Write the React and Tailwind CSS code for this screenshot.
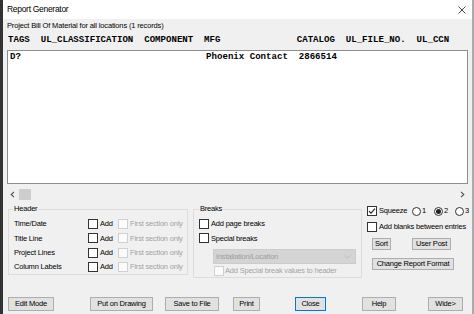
import React from "react";

const Check = ({ checked, disabled }) =>
  disabled ? (
    <span className="w-[10px] h-[10px] shrink-0 border border-[#d0d0d0] bg-[#fbfbfb]" />
  ) : (
    <span className="w-[10px] h-[10px] shrink-0 border border-[#333333] bg-white flex items-center justify-center">
      {checked && (
        <svg width="8" height="8" viewBox="0 0 8 8">
          <path d="M1 4.2 L3 6.2 L7 1.6" fill="none" stroke="#222" strokeWidth="1.1" />
        </svg>
      )}
    </span>
  );

const Radio = ({ on }) => (
  <span className="w-[9px] h-[9px] shrink-0 rounded-full border border-[#333333] bg-white flex items-center justify-center">
    {on && <span className="w-[5px] h-[5px] rounded-full bg-[#222222]" />}
  </span>
);

const Btn = ({ className, children }) => (
  <div
    className={
      "flex items-center justify-center border bg-[#e1e1e1] text-[7.5px] tracking-[-0.2px] text-black leading-none " +
      className
    }
  >
    {children}
  </div>
);

const HeaderRow = ({ label }) => (
  <div className="h-[14.3px] flex items-center">
    <span className="w-[74px]">{label}</span>
    <Check />
    <span className="ml-[2px] w-[18px]">Add</span>
    <Check disabled />
    <span className="ml-[2px] text-[#a3a3a3]">First section only</span>
  </div>
);

export default function App() {
  const header =
    "TAGS  UL_CLASSIFICATION  COMPONENT  MFG              CATALOG  UL_FILE_NO.  UL_CCN";
  const row = "D?                                  Phoenix Contact  2866514";
  return (
    <div className="w-[474px] h-[314px] flex bg-[#f0f0f0] overflow-hidden font-['Liberation_Sans',Arial,sans-serif] text-black">
      <div className="w-[3px] shrink-0 bg-[#333333]" />
      <div className="flex-1 flex flex-col">
        {/* title bar */}
        <div className="h-[19px] bg-white flex items-center pl-[4px] pr-[5px]">
          <span className="text-[8.5px] tracking-[-0.3px] leading-none">Report Generator</span>
          <svg className="ml-auto mr-[1px]" width="8" height="8" viewBox="0 0 8 8">
            <path d="M0.5 0.5 L7.5 7.5 M7.5 0.5 L0.5 7.5" stroke="#333" strokeWidth="0.9" />
          </svg>
        </div>
        {/* project line */}
        <div className="h-[14px] flex items-center pl-[4px] text-[7.5px] tracking-[-0.15px] leading-none">
          Project Bill Of Material for all locations (1 records)
        </div>
        {/* header */}
        <div className="h-[14px] flex items-center pl-[5px] font-['Liberation_Mono',monospace] font-bold text-[9.08px] leading-none whitespace-pre">
          {header}
        </div>
        {/* listbox */}
        <div className="mt-[3px] ml-[4px] w-[461px] h-[134px] border border-[#8e8e8e] bg-white pl-[2px]">
          <div className="h-[12px] flex items-center font-['Liberation_Mono',monospace] font-bold text-[9.08px] leading-none whitespace-pre">
            {row}
          </div>
        </div>
        {/* scrollbar */}
        <div className="mt-[5px] ml-[4px] w-[461px] h-[11px] flex items-center">
          <div className="w-[11px] h-[11px] flex items-center justify-center">
            <svg width="5" height="7" viewBox="0 0 5 7">
              <path d="M4 0.8 L1.2 3.5 L4 6.2" fill="none" stroke="#505050" strokeWidth="1.1" />
            </svg>
          </div>
          <div className="ml-[1px] w-[12px] h-[11px] bg-[#cdcdcd]" />
          <div className="ml-auto w-[11px] h-[11px] flex items-center justify-center">
            <svg width="5" height="7" viewBox="0 0 5 7">
              <path d="M1 0.8 L3.8 3.5 L1 6.2" fill="none" stroke="#505050" strokeWidth="1.1" />
            </svg>
          </div>
        </div>
        {/* groups row */}
        <div className="mt-[4px] h-[74px] flex items-start text-[7.5px] tracking-[-0.2px] leading-none">
          {/* Header group */}
          <div className="relative mt-[5px] ml-[5px] w-[180px] h-[66px] border border-[#dcdcdc] pl-[5px] pt-[7px]">
            <span className="absolute -top-[5px] left-[4px] bg-[#f0f0f0] px-[1px]">Header</span>
            <HeaderRow label="Time/Date" />
            <HeaderRow label="Title Line" />
            <HeaderRow label="Project Lines" />
            <HeaderRow label="Column Labels" />
          </div>
          {/* Breaks group */}
          <div className="relative mt-[5px] ml-[5px] w-[169px] h-[69px] border border-[#dcdcdc] pl-[5px] pt-[7px]">
            <span className="absolute -top-[5px] left-[5px] bg-[#f0f0f0] px-[1px]">Breaks</span>
            <div className="h-[14.3px] flex items-center">
              <Check />
              <span className="ml-[2px]">Add page breaks</span>
            </div>
            <div className="h-[14.3px] flex items-center">
              <Check />
              <span className="ml-[2px]">Special breaks</span>
            </div>
            <div className="mt-[3.5px] ml-[14px] w-[143px] h-[15px] bg-[#d4d4d4] border border-[#cccccc] flex items-center pl-[2px] pr-[4px] text-[#9e9e9e]">
              <span>Installation/Location</span>
              <svg className="ml-auto" width="7" height="4" viewBox="0 0 7 4">
                <path d="M0.5 0.5 L3.5 3.3 L6.5 0.5" fill="none" stroke="#b8b8b8" strokeWidth="0.9" />
              </svg>
            </div>
            <div className="mt-[2px] ml-[15px] h-[10px] flex items-center">
              <Check disabled />
              <span className="ml-[1px] text-[#a3a3a3]">Add Special break values to header</span>
            </div>
          </div>
          {/* right column */}
          <div className="ml-[5px] flex flex-col">
            <div className="h-[14px] flex items-center">
              <Check checked />
              <span className="ml-[2px] w-[33px]">Squeeze</span>
              <span className="w-[22px] flex items-center">
                <Radio />
                <span className="ml-[1px]">1</span>
              </span>
              <span className="w-[21px] flex items-center">
                <Radio on />
                <span className="ml-[1px]">2</span>
              </span>
              <span className="flex items-center">
                <Radio />
                <span className="ml-[1px]">3</span>
              </span>
            </div>
            <div className="mt-[2px] h-[14px] flex items-center">
              <Check />
              <span className="ml-[2px]">Add blanks between entries</span>
            </div>
            <div className="mt-[4px] flex">
              <Btn className="ml-[5px] w-[19px] h-[12px] border-[#adadad]">Sort</Btn>
              <Btn className="ml-[21px] w-[39px] h-[12px] border-[#adadad]">User Post</Btn>
            </div>
            <div className="mt-[8px] flex">
              <Btn className="ml-[5px] w-[82px] h-[12px] border-[#adadad]">Change Report Format</Btn>
            </div>
          </div>
        </div>
        {/* bottom buttons */}
        <div className="mt-[19px] h-[14px] flex">
          <Btn className="ml-[5px] w-[46px] h-[14px] border-[#adadad]">Edit Mode</Btn>
          <Btn className="ml-[36px] w-[63px] h-[14px] border-[#adadad]">Put on Drawing</Btn>
          <Btn className="ml-[12px] w-[54px] h-[14px] border-[#adadad]">Save to File</Btn>
          <Btn className="ml-[14px] w-[27px] h-[14px] border-[#adadad]">Print</Btn>
          <Btn className="ml-[35px] w-[31px] h-[14px] border-[#0078d7]">Close</Btn>
          <Btn className="ml-[36px] w-[34px] h-[14px] border-[#adadad]">Help</Btn>
          <Btn className="ml-[32px] w-[35px] h-[14px] border-[#adadad]">Wide&gt;</Btn>
        </div>
      </div>
      <div className="w-[2px] shrink-0 bg-[#ababab]" />
    </div>
  );
}
